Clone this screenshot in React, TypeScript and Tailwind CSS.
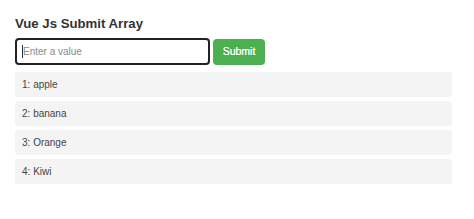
import { useState } from "react";

const initialItems = ["apple", "banana", "Orange", "Kiwi"];

export default function App() {
  const [items, setItems] = useState<string[]>(initialItems);
  const [value, setValue] = useState("");

  const submit = () => {
    if (!value.trim()) return;
    setItems([...items, value.trim()]);
    setValue("");
  };

  return (
    <div className="min-h-screen bg-white font-['Liberation_Sans',Arial,sans-serif] text-[#333]">
      <div className="w-[437px] ml-[15px] pt-[16px]">
        <h3 className="text-[13.2px] font-bold leading-[16px] text-[#333]">
          Vue Js Submit Array
        </h3>
        <div className="mt-[6px] flex items-center gap-[3px]">
          <div className="relative">
            <input
              value={value}
              onChange={(e) => setValue(e.target.value)}
              placeholder="Enter a value"
              className="w-[195px] h-[27px] rounded-[4px] border-2 border-[#222] px-[6px] text-[10px] text-[#333] placeholder:text-[#8a8a8a] outline-none"
            />
            <span className="absolute left-[7px] top-[7px] h-[13px] w-px bg-[#333]" />
          </div>
          <button
            onClick={submit}
            className="h-[26px] w-[52px] rounded-[4px] bg-[#4caf50] text-[10.5px] text-white [text-shadow:0_0_0.4px_#fff]"
          >
            Submit
          </button>
        </div>
        <ul className="mt-[7px] flex flex-col gap-[4px]">
          {items.map((item, i) => (
            <li
              key={i}
              className="h-[25px] flex items-center rounded-[3px] bg-[#f4f4f4] px-[7px] text-[10px] text-[#444]"
            >
              {i + 1}: {item}
            </li>
          ))}
        </ul>
      </div>
    </div>
  );
}
